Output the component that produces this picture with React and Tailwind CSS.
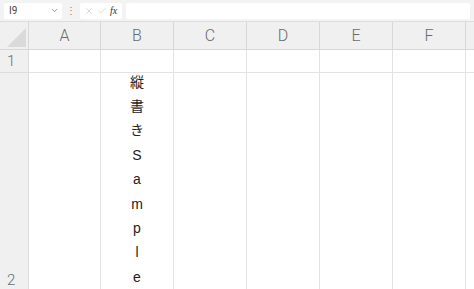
import { ChevronDown, X, Check } from 'lucide-react';

const COLS = ['A', 'B', 'C', 'D', 'E', 'F', ''];
const TEXT = ['縦', '書', 'き', 'S', 'a', 'm', 'p', 'l', 'e'];

export default function App() {
    return (
        <div className="h-[289px] w-[474px] overflow-hidden bg-white font-['Roboto','Noto_Sans_CJK_JP',sans-serif]">
            {/* formula bar */}
            <div className="flex h-[22px] items-center gap-[4px] border-b border-[#dcdcdc] bg-[#f3f3f3] px-[4px]">
                <div className="flex h-[16px] w-[58px] items-center justify-between rounded-[2px] bg-white pl-[5px] pr-[3px] text-[10px] text-[#444]">
                    <span>I9</span>
                    <ChevronDown size={9} strokeWidth={2} className="text-[#777]" />
                </div>
                <span className="text-[10px] leading-none text-[#888]">⋮</span>
                <div className="flex h-[16px] w-[42px] items-center gap-[3px] rounded-[2px] bg-white px-[4px]">
                    <X size={10} strokeWidth={1.5} className="text-[#c4c4c4]" />
                    <Check size={10} strokeWidth={1.5} className="text-[#c4c4c4]" />
                    <span className="font-['Liberation_Serif',serif] text-[10px] italic text-[#333]">fx</span>
                </div>
                <div className="h-[16px] flex-1 rounded-[2px] bg-white" />
            </div>

            {/* sheet */}
            <div className="grid grid-cols-[29px_72px_73px_73px_73px_73px_73px_40px] grid-rows-[28px_23px_220px]">
                <div className="flex items-end justify-end border-r border-b border-[#d8d8d8] bg-[#f0f0f0] pb-[2px] pr-[2px]">
                    <div className="h-0 w-0 border-l-[19px] border-t-[19px] border-l-transparent border-t-transparent border-b-0 [border-right:19px_solid_#dadada]" />
                </div>
                {COLS.map((c, i) => (
                    <div
                        key={i}
                        className="flex items-center justify-center border-r border-b border-[#d8d8d8] bg-[#f0f0f0] text-[16px] font-light text-[#6a6a6a]"
                    >
                        {c}
                    </div>
                ))}

                {/* row 1 */}
                <div className="flex items-center pl-[7px] border-r border-b border-[#dcdcdc] bg-[#f0f0f0] text-[15px] font-light text-[#6a6a6a]">
                    1
                </div>
                {COLS.map((c, i) => (
                    <div key={i} className="border-r border-b border-[#e3e3e3]" />
                ))}

                {/* row 2 */}
                <div className="flex items-end pl-[7px] pb-[2px] border-r border-[#dcdcdc] bg-[#f0f0f0] text-[15px] font-light text-[#6a6a6a]">
                    2
                </div>
                {COLS.map((c, i) => (
                    <div key={i} className="border-r border-[#e3e3e3]">
                        {c === 'B' && (
                            <div className="-mt-[3px] flex flex-col items-center font-['Liberation_Sans','Noto_Sans_CJK_JP',sans-serif] text-[14px] text-[#222]">
                                {TEXT.map((t, j) => (
                                    <div key={j} className="flex h-[24.4px] items-center">{t}</div>
                                ))}
                            </div>
                        )}
                    </div>
                ))}
            </div>
        </div>
    );
}
